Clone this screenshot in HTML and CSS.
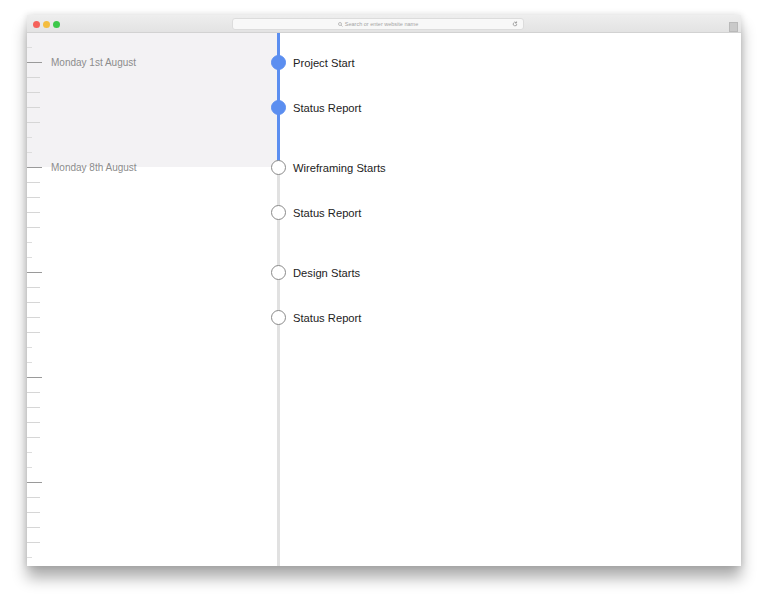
FILE: index.html
```html
<!DOCTYPE html>
<html lang="en">
<head>
<meta charset="utf-8">
<title>Timeline</title>
<link rel="stylesheet" href="styles.css">
</head>
<body>
<div class="window">
  <div class="titlebar">
    <div class="lights">
      <span class="light red"></span>
      <span class="light yellow"></span>
      <span class="light green"></span>
    </div>
    <div class="address">
      <span class="address-text">
        <svg class="mag" viewBox="0 0 10 10" width="5" height="5"><circle cx="4" cy="4" r="3" fill="none" stroke="#999" stroke-width="1.2"/><line x1="6.2" y1="6.2" x2="9" y2="9" stroke="#999" stroke-width="1.2"/></svg>
        Search or enter website name
      </span>
      <svg class="reload" viewBox="0 0 10 10" width="6" height="6"><path d="M8 5a3 3 0 1 1-1-2.2" fill="none" stroke="#888" stroke-width="1.2"/><path d="M7.6 0.8v2.6h-2.6" fill="none" stroke="#888" stroke-width="1.2"/></svg>
    </div>
    <span class="side-btn"></span>
  </div>
  <div class="timeline">
    <div class="day weekend"><i class="tick"></i></div>
    <div class="day monday"><i class="tick"></i><span class="date">Monday 1st August</span><span class="dot done"></span><span class="event">Project Start</span></div>
    <div class="day"><i class="tick"></i></div>
    <div class="day"><i class="tick"></i></div>
    <div class="day"><i class="tick"></i><span class="dot done"></span><span class="event">Status Report</span></div>
    <div class="day"><i class="tick"></i></div>
    <div class="day weekend"><i class="tick"></i></div>
    <div class="day weekend"><i class="tick"></i></div>
    <div class="day monday"><i class="tick"></i><span class="date">Monday 8th August</span><span class="dot"></span><span class="event">Wireframing Starts</span></div>
    <div class="day"><i class="tick"></i></div>
    <div class="day"><i class="tick"></i></div>
    <div class="day"><i class="tick"></i><span class="dot"></span><span class="event">Status Report</span></div>
    <div class="day"><i class="tick"></i></div>
    <div class="day weekend"><i class="tick"></i></div>
    <div class="day weekend"><i class="tick"></i></div>
    <div class="day monday"><i class="tick"></i><span class="dot"></span><span class="event">Design Starts</span></div>
    <div class="day"><i class="tick"></i></div>
    <div class="day"><i class="tick"></i></div>
    <div class="day"><i class="tick"></i><span class="dot"></span><span class="event">Status Report</span></div>
    <div class="day"><i class="tick"></i></div>
    <div class="day weekend"><i class="tick"></i></div>
    <div class="day weekend"><i class="tick"></i></div>
    <div class="day monday"><i class="tick"></i></div>
    <div class="day"><i class="tick"></i></div>
    <div class="day"><i class="tick"></i></div>
    <div class="day"><i class="tick"></i></div>
    <div class="day"><i class="tick"></i></div>
    <div class="day weekend"><i class="tick"></i></div>
    <div class="day weekend"><i class="tick"></i></div>
    <div class="day monday"><i class="tick"></i></div>
    <div class="day"><i class="tick"></i></div>
    <div class="day"><i class="tick"></i></div>
    <div class="day"><i class="tick"></i></div>
    <div class="day"><i class="tick"></i></div>
    <div class="day weekend"><i class="tick"></i></div>
  </div>
</div>
</body>
</html>
```

FILE: styles.css
```css
html, body {
  margin: 0;
  padding: 0;
  background: #ffffff;
}

body {
  width: 768px;
  height: 605px;
  overflow: hidden;
  font-family: "Liberation Sans", Arial, sans-serif;
}

.window {
  margin: 15px 0 0 27px;
  width: 714px;
  height: 551px;
  background: #ffffff;
  display: flex;
  flex-direction: column;
  box-shadow: 0 12px 14px rgba(0, 0, 0, 0.32), 0 0 7px rgba(0, 0, 0, 0.14);
}

/* ---------- title bar ---------- */
.titlebar {
  height: 18px;
  flex: none;
  display: grid;
  grid-template-columns: 205px 292px 1fr;
  align-items: start;
  background: linear-gradient(#eeeeee, #e3e3e3);
  border-bottom: 1px solid #d2d2d2;
  box-sizing: border-box;
}

.lights {
  display: flex;
  gap: 3px;
  padding: 6px 0 0 6px;
}

.light {
  width: 7px;
  height: 7px;
  border-radius: 50%;
}
.red { background: #f5615a; }
.yellow { background: #f4bd3f; }
.green { background: #3cc84a; }

.address {
  margin-top: 3px;
  height: 12px;
  background: #f8f8f8;
  border: 1px solid #dcdcdc;
  border-radius: 3px;
  box-sizing: border-box;
  display: flex;
  align-items: center;
  justify-content: center;
  position: relative;
}

.address-text {
  font-size: 5.5px;
  color: #a5a5a5;
  display: flex;
  align-items: center;
  gap: 2px;
  white-space: nowrap;
}

.reload {
  position: absolute;
  right: 5px;
  top: 2px;
}

.side-btn {
  justify-self: end;
  margin: 7px 3px 0 0;
  width: 9px;
  height: 10px;
  background: #c9c9c9;
  border: 1px solid #b9b9b9;
  box-sizing: border-box;
}

/* ---------- timeline ---------- */
.timeline {
  flex: 1;
  padding-top: 7px;
  background:
    linear-gradient(#5b8ef0 0 130px, #e1e1e1 130px) 250px 0 / 3px 100% no-repeat,
    linear-gradient(#f3f2f4 0 134px, transparent 134px) 0 0 / 250px 100% no-repeat;
}

.day {
  height: 15px;
  display: grid;
  grid-template-columns: 24px 220px 15px 1fr;
  align-items: center;
}

.tick {
  grid-column: 1;
  display: block;
  width: 13px;
  height: 1px;
  background: #d6d6d6;
}
.monday .tick {
  width: 15px;
  background: #9a9a9a;
}
.weekend .tick {
  width: 5px;
  background: #dddddd;
}

.date {
  grid-column: 2;
  font-size: 10px;
  color: #8c8c8c;
}

.dot {
  grid-column: 3;
  width: 15px;
  height: 15px;
  border-radius: 50%;
  box-sizing: border-box;
  background: #ffffff;
  border: 1.6px solid #8a8a8a;
}
.dot.done {
  background: #5b8ef0;
  border-color: #5b8ef0;
}

.event {
  grid-column: 4;
  margin-left: 7px;
  font-size: 11.2px;
  color: #222222;
}
```
